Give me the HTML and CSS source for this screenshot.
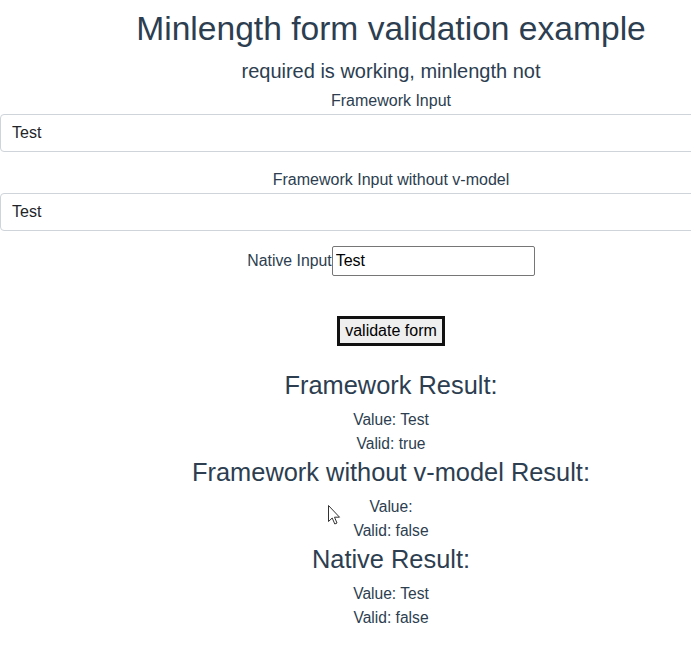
FILE: index.html
```html
<!DOCTYPE html>
<html lang="en">
<head>
<meta charset="utf-8">
<title>Minlength form validation example</title>
<link rel="stylesheet" href="styles.css">
</head>
<body>
<div class="app">
  <h1 class="title">Minlength form validation example</h1>
  <h2 class="subtitle">required is working, minlength not</h2>
  <form class="form">
    <div class="field field-first">
      <label class="field-label">Framework Input</label>
      <input class="form-control" type="text" value="Test">
    </div>
    <div class="field field-next">
      <label class="field-label">Framework Input without v-model</label>
      <input class="form-control" type="text" value="Test">
    </div>
    <div class="native-row">
      <label class="native-label">Native Input</label><input class="native-input" type="text" value="Test">
    </div>
    <button class="validate-btn" type="button">validate form</button>
  </form>
  <div class="results">
    <section class="result">
      <h3 class="result-title">Framework Result:</h3>
      <p class="result-line">Value: Test</p>
      <p class="result-line">Valid: true</p>
    </section>
    <section class="result">
      <h3 class="result-title">Framework without v-model Result:</h3>
      <p class="result-line">Value: </p>
      <p class="result-line">Valid: false</p>
    </section>
    <section class="result">
      <h3 class="result-title">Native Result:</h3>
      <p class="result-line">Value: Test</p>
      <p class="result-line">Valid: false</p>
    </section>
  </div>
</div>
<svg class="cursor" width="13" height="21" viewBox="0 0 13 21" aria-hidden="true">
  <path d="M0.5 0.5 L0.5 16.5 L4.2 13 L6.8 19 L9 18 L6.5 12.2 L11.5 12.2 Z" fill="#fff" stroke="#333" stroke-width="1" stroke-linejoin="miter"/>
</svg>
</body>
</html>
```
FILE: styles.css
```css
html, body {
  margin: 0;
  padding: 0;
  background: #fff;
  overflow-x: hidden;
}

body {
  position: relative;
  font-family: "Liberation Sans", Arial, sans-serif;
}

.app {
  width: 782px;
  text-align: center;
  color: #2c3e50;
}

.title {
  font-size: 33.6px;
  line-height: 40px;
  font-weight: normal;
  margin: 9px 0 0;
}

.subtitle {
  font-size: 20px;
  line-height: 24px;
  font-weight: normal;
  margin: 9.5px 0 0;
}

.form {
  margin: 0;
}

.field-first {
  margin-top: 9.5px;
}

.field-next {
  margin-top: 18.5px;
}

.field-label {
  display: block;
  font-size: 16px;
  line-height: 18px;
  margin-bottom: 4px;
}

.form-control {
  display: block;
  width: 100%;
  box-sizing: border-box;
  height: 38px;
  margin: 0;
  padding: 6px 11px;
  font-family: "Liberation Sans", Arial, sans-serif;
  font-size: 16px;
  line-height: 24px;
  color: #212529;
  background: #fff;
  border: 1px solid #ced4da;
  border-radius: 4px;
  text-align: left;
  outline: none;
}

.native-row {
  display: flex;
  justify-content: center;
  align-items: baseline;
  margin-top: 15.5px;
}

.native-label {
  font-size: 15.8px;
}

.native-input {
  width: 203px;
  height: 30px;
  box-sizing: border-box;
  margin: 0;
  padding: 1px 3px;
  font-family: "Liberation Sans", Arial, sans-serif;
  font-size: 16px;
  color: #000;
  background: #fff;
  border: 1px solid #767676;
  border-radius: 2px;
  outline: none;
}

.validate-btn {
  display: block;
  margin: 40px auto 0;
  width: 108px;
  height: 30px;
  box-sizing: border-box;
  padding: 0;
  font-family: "Liberation Sans", Arial, sans-serif;
  font-size: 16px;
  color: #000;
  background: #efefef;
  border: 3px solid #111;
  border-radius: 0;
}

.results {
  margin-top: 24px;
}

.result + .result {
  margin-top: 1.5px;
}

.result-title {
  font-size: 25.4px;
  line-height: 30px;
  font-weight: normal;
  margin: 0 0 7.5px;
}

.result-line {
  font-size: 15.6px;
  line-height: 24px;
  margin: 0;
}

.cursor {
  position: absolute;
  left: 328px;
  top: 505px;
}
```
